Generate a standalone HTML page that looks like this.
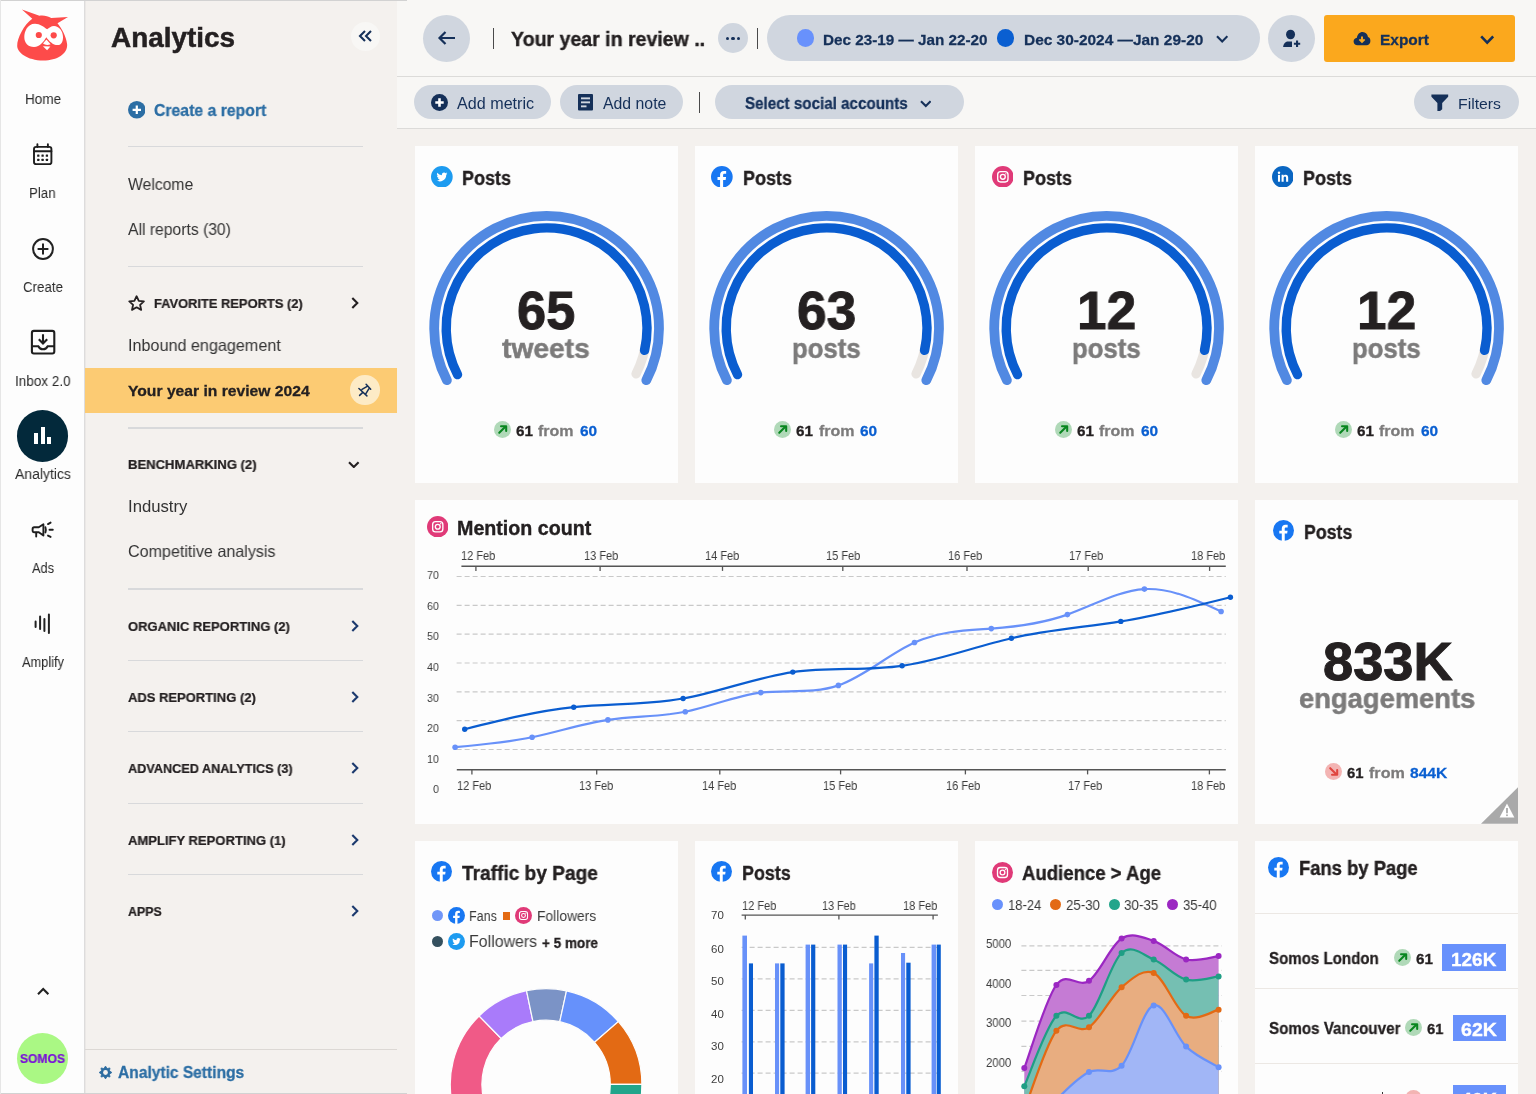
<!DOCTYPE html><html><head><meta charset="utf-8"><style>
*{margin:0;padding:0;box-sizing:border-box}
html,body{width:1536px;height:1094px;overflow:hidden;background:#f4f1ee;font-family:"Liberation Sans",sans-serif}
.t{position:absolute;white-space:nowrap;line-height:1;will-change:transform}
.r{position:absolute;display:block}
</style></head><body><div class="r" style="left:0.00px;top:0.00px;width:84.00px;height:1094.00px;background:#fdfdfd;"></div>
<div class="r" style="left:84.00px;top:0.00px;width:1.00px;height:1094.00px;background:#dddcdc;"></div>
<div class="r" style="left:85.00px;top:0.00px;width:1.00px;height:1094.00px;background:#ebe8e6;"></div>
<div class="r" style="left:86.00px;top:0.00px;width:311.00px;height:1094.00px;background:#f4f1ee;"></div>
<div class="r" style="left:397.00px;top:0.00px;width:1139.00px;height:128.00px;background:#f8f7f5;"></div>
<div class="r" style="left:397.00px;top:76.00px;width:1139.00px;height:1.20px;background:#dcdbd9;"></div>
<div class="r" style="left:397.00px;top:128.00px;width:1139.00px;height:1.20px;background:#dcdbd9;"></div>
<div class="r" style="left:0.00px;top:0.00px;width:407.00px;height:1.20px;background:#d2d2d2;"></div>
<div class="r" style="left:0.00px;top:1092.80px;width:407.00px;height:1.20px;background:#d2d2d2;"></div>
<div class="r" style="left:0.00px;top:0.00px;width:1.20px;height:1094.00px;background:#e6e6e6;"></div>
<svg class="r" style="left:12.00px;top:4.00px;" width="60.00" height="60.00" viewBox="0 0 60 60"><path fill="#fd4b4a" d="M9.9,5.5 L27.4,11.8 C31,11 36,12 39.2,14 L56,12.9 L45.5,19.2 C50,25 54,32 55.1,40 C56,50 45,56.5 31.3,56.5 C15,56.5 5,48 5.2,41.7 C5,35 12,20 20.3,14.8 Z"/><path fill="#fff" d="M35.1,25.2 C32,23 28,19.7 23,19.7 C15,19.7 12.3,28 12.3,33 C12.3,39 16,43 22,43 C28,43 32,37 34.3,33.2 C37,37 41,41.1 45.5,41.1 C50,41.1 51,37 51,33 C51,27 47,21.9 42,21.9 C39,21.9 37,24 35.1,25.2 Z"/><circle cx="26.8" cy="31" r="3.1" fill="#fd4b4a"/><circle cx="41.7" cy="31.3" r="3.1" fill="#fd4b4a"/><path fill="#fff" d="M31,39.6 L34.4,35.6 L38.6,40.3 C36,41.3 33,41.2 31,39.6 Z"/><path fill="#fff" d="M30.9,42.2 L38.4,42.6 L35.1,46.3 Z"/></svg>
<div class="t" style="left:24.60px;top:92.22px;font-size:14.68px;font-weight:400;color:#2b2b2b;transform:scaleX(0.9235);transform-origin:0 0;">Home</div>
<svg class="r" style="left:26.00px;top:136.00px;" width="34.00" height="36.00" viewBox="0 0 34 36"><rect x="8" y="10.9" width="17.4" height="17.2" rx="2.2" fill="none" stroke="#1e1e1e" stroke-width="1.9"/><path d="M8,15.3H25.4M11.4,8.2V11M21.9,8.2V11" stroke="#1e1e1e" stroke-width="1.9" stroke-linecap="round"/><rect x="11.15" y="18.45" width="2.3" height="2.3" rx="0.5" fill="#1e1e1e"/><rect x="11.15" y="22.75" width="2.3" height="2.3" rx="0.5" fill="#1e1e1e"/><rect x="15.45" y="18.45" width="2.3" height="2.3" rx="0.5" fill="#1e1e1e"/><rect x="15.45" y="22.75" width="2.3" height="2.3" rx="0.5" fill="#1e1e1e"/><rect x="19.75" y="18.45" width="2.3" height="2.3" rx="0.5" fill="#1e1e1e"/><rect x="19.75" y="22.75" width="2.3" height="2.3" rx="0.5" fill="#1e1e1e"/></svg>
<div class="t" style="left:29.40px;top:186.41px;font-size:14.68px;font-weight:400;color:#2b2b2b;transform:scaleX(0.9060);transform-origin:0 0;">Plan</div>
<svg class="r" style="left:31.90px;top:237.70px;" width="22.00" height="22.00" viewBox="0 0 22 22"><circle cx="11" cy="11" r="9.9" fill="none" stroke="#222" stroke-width="2"/><path d="M11 5.6V16.4M5.6 11H16.4" stroke="#222" stroke-width="2"/></svg>
<div class="t" style="left:22.75px;top:280.41px;font-size:14.68px;font-weight:400;color:#2b2b2b;transform:scaleX(0.9060);transform-origin:0 0;">Create</div>
<svg class="r" style="left:26.00px;top:322.00px;" width="34.00" height="40.00" viewBox="0 0 34 40"><rect x="5.9" y="8.9" width="22.4" height="22.6" rx="2" fill="none" stroke="#1e1e1e" stroke-width="2.1"/><path d="M17,12.2V21M12.8,17.3L17,21.5L21.2,17.3" fill="none" stroke="#1e1e1e" stroke-width="2.1"/><path d="M5.9,24.3H12.3C13.2,26.2 14.9,27.3 17,27.3C19.1,27.3 20.8,26.2 21.7,24.3H28.3" fill="none" stroke="#1e1e1e" stroke-width="2.1"/></svg>
<div class="t" style="left:14.90px;top:374.01px;font-size:14.68px;font-weight:400;color:#2b2b2b;transform:scaleX(0.9204);transform-origin:0 0;">Inbox 2.0</div>
<div class="r" style="left:16.75px;top:410.35px;width:51.30px;height:51.30px;background:#03293b;border-radius:50%;"></div>
<div class="r" style="left:33.90px;top:432.70px;width:4.10px;height:11.60px;background:#fff;"></div>
<div class="r" style="left:40.70px;top:427.20px;width:4.70px;height:17.10px;background:#fff;"></div>
<div class="r" style="left:47.00px;top:436.90px;width:4.30px;height:7.40px;background:#fff;"></div>
<div class="t" style="left:14.70px;top:467.31px;font-size:14.68px;font-weight:400;color:#2b2b2b;transform:scaleX(0.9536);transform-origin:0 0;">Analytics</div>
<svg class="r" style="left:26.00px;top:510.00px;" width="34.00" height="35.00" viewBox="0 0 34 35"><g fill="none" stroke="#1e1e1e" stroke-width="1.9" stroke-linecap="round" stroke-linejoin="round"><path d="M12.8,17.3 L17.4,14.2 V25.6 L12.8,22.3 H8.2 C7.1,22.3 6.6,21.6 6.6,20.6 V19 C6.6,18 7.1,17.3 8.2,17.3 Z"/><path d="M10.2,22.6 V26.6"/><path d="M19.4,17.2 C19.9,18.6 19.9,20.9 19.4,22.4"/><path d="M22,14.1 L24.6,12.6 M23.5,19.8 H26.8 M22,25.6 L24.6,26.9"/></g></svg>
<div class="t" style="left:31.70px;top:561.22px;font-size:14.68px;font-weight:400;color:#2b2b2b;transform:scaleX(0.8687);transform-origin:0 0;">Ads</div>
<svg class="r" style="left:26.00px;top:605.00px;" width="34.00" height="35.00" viewBox="0 0 34 35"><path d="M9.6,16.6V22.1M14.1,11.6V24M18.4,14V26.1M22.9,9.4V28" stroke="#222" stroke-width="2" stroke-linecap="round"/></svg>
<div class="t" style="left:21.70px;top:655.01px;font-size:14.68px;font-weight:400;color:#2b2b2b;transform:scaleX(0.8722);transform-origin:0 0;">Amplify</div>
<svg class="r" style="left:36.70px;top:986.50px;" width="12.40" height="8.20" viewBox="0 0 12.4 8.2"><path d="M1 7.2L6.2 2L11.4 7.2" fill="none" stroke="#222" stroke-width="2.1"/></svg>
<div class="r" style="left:16.90px;top:1032.90px;width:51.40px;height:51.40px;background:#aaf884;border-radius:50%;"></div>
<div class="t" style="left:20.10px;top:1053.01px;font-size:12.50px;font-weight:700;color:#7a12d8;transform:scaleX(0.9664);transform-origin:0 0;-webkit-text-stroke:0.23px #7a12d8;">SOMOS</div>
<div class="t" style="left:110.80px;top:23.81px;font-size:27.18px;font-weight:700;color:#242021;transform:scaleX(1.0263);transform-origin:0 0;-webkit-text-stroke:0.49px #242021;">Analytics</div>
<div class="r" style="left:350.50px;top:21.80px;width:29.00px;height:29.00px;background:#f8f7f5;border-radius:50%;"></div>
<svg class="r" style="left:357.50px;top:30.00px;" width="15.00" height="12.00" viewBox="0 0 15 12"><path d="M7 1L2 6L7 11M13 1L8 6L13 11" fill="none" stroke="#153059" stroke-width="2.1"/></svg>
<svg class="r" style="left:127.70px;top:101.00px;" width="17.60" height="17.60" viewBox="0 0 17.6 17.6"><circle cx="8.8" cy="8.8" r="8.8" fill="#2c6ea4"/><path d="M8.8 4.6V13M4.6 8.8H13" stroke="#fff" stroke-width="2.2"/></svg>
<div class="t" style="left:153.60px;top:102.30px;font-size:16.28px;font-weight:700;color:#2c6ea4;transform:scaleX(0.9704);transform-origin:0 0;-webkit-text-stroke:0.29px #2c6ea4;">Create a report</div>
<div class="r" style="left:127.70px;top:145.80px;width:235.10px;height:1.20px;background:#d8d9db;"></div>
<div class="r" style="left:127.70px;top:266.20px;width:235.10px;height:1.20px;background:#d8d9db;"></div>
<div class="r" style="left:127.70px;top:427.40px;width:235.10px;height:1.20px;background:#d8d9db;"></div>
<div class="r" style="left:127.70px;top:588.40px;width:235.10px;height:1.20px;background:#d8d9db;"></div>
<div class="r" style="left:127.70px;top:660.00px;width:235.10px;height:1.20px;background:#d8d9db;"></div>
<div class="r" style="left:127.70px;top:731.10px;width:235.10px;height:1.20px;background:#d8d9db;"></div>
<div class="r" style="left:127.70px;top:802.50px;width:235.10px;height:1.20px;background:#d8d9db;"></div>
<div class="r" style="left:127.70px;top:874.20px;width:235.10px;height:1.20px;background:#d8d9db;"></div>
<div class="t" style="left:127.70px;top:176.82px;font-size:15.99px;font-weight:400;color:#333333;transform:scaleX(0.9841);transform-origin:0 0;">Welcome</div>
<div class="t" style="left:127.70px;top:221.82px;font-size:15.99px;font-weight:400;color:#333333;transform:scaleX(0.9820);transform-origin:0 0;">All reports (30)</div>
<svg class="r" style="left:127.80px;top:295.00px;" width="17.20" height="16.00" viewBox="0 0 17.2 16"><path d="M8.6 1.2L10.8 5.9L15.9 6.4L12.1 9.8L13.2 14.9L8.6 12.3L4 14.9L5.1 9.8L1.3 6.4L6.4 5.9Z" fill="none" stroke="#242021" stroke-width="1.8" stroke-linejoin="round"/></svg>
<div class="t" style="left:154.00px;top:296.91px;font-size:13.52px;font-weight:700;color:#242021;transform:scaleX(0.9532);transform-origin:0 0;-webkit-text-stroke:0.24px #242021;">FAVORITE REPORTS (2)</div>
<svg class="r" style="left:350.90px;top:297.20px;" width="8.00" height="12.00" viewBox="0 0 8 12"><path d="M1.3 1L6.3 6L1.3 11" fill="none" stroke="#242021" stroke-width="2.1"/></svg>
<div class="t" style="left:127.80px;top:337.30px;font-size:16.28px;font-weight:400;color:#333333;transform:scaleX(0.9940);transform-origin:0 0;">Inbound engagement</div>
<div class="r" style="left:85.00px;top:368.00px;width:312.00px;height:44.70px;background:#fccb73;"></div>
<div class="t" style="left:127.80px;top:382.60px;font-size:15.55px;font-weight:700;color:#242021;transform:scaleX(1.0077);transform-origin:0 0;-webkit-text-stroke:0.28px #242021;">Your year in review 2024</div>
<div class="r" style="left:350.00px;top:375.40px;width:29.60px;height:29.60px;background:#fdebc6;border-radius:50%;"></div>
<svg class="r" style="left:348.00px;top:374.00px;" width="34.00" height="32.00" viewBox="348 374 34 32"><g fill="none" stroke="#153059" stroke-width="1.5" stroke-linecap="round" stroke-linejoin="round"><path d="M366.1,384.2L370.7,389.2M358.9,388.5L366.9,395.9M362,389.4L367.2,386.3M368.8,388.9L365.9,393.6M362.3,392.9L359.6,395.4"/></g></svg>
<div class="t" style="left:127.80px;top:458.10px;font-size:13.37px;font-weight:700;color:#242021;transform:scaleX(0.9786);transform-origin:0 0;-webkit-text-stroke:0.24px #242021;">BENCHMARKING (2)</div>
<svg class="r" style="left:348.30px;top:460.60px;" width="11.60" height="7.80" viewBox="0 0 11.6 7.8"><path d="M1 1.2L5.8 6L10.6 1.2" fill="none" stroke="#242021" stroke-width="2.1"/></svg>
<div class="t" style="left:127.80px;top:498.30px;font-size:16.28px;font-weight:400;color:#333333;transform:scaleX(1.0264);transform-origin:0 0;">Industry</div>
<div class="t" style="left:127.80px;top:543.21px;font-size:16.28px;font-weight:400;color:#333333;transform:scaleX(0.9887);transform-origin:0 0;">Competitive analysis</div>
<div class="t" style="left:127.80px;top:620.01px;font-size:13.52px;font-weight:700;color:#242021;transform:scaleX(0.9618);transform-origin:0 0;-webkit-text-stroke:0.24px #242021;">ORGANIC REPORTING (2)</div>
<svg class="r" style="left:351.20px;top:619.80px;" width="8.00" height="12.00" viewBox="0 0 8 12"><path d="M1.3 1L6.3 6L1.3 11" fill="none" stroke="#1c3a6e" stroke-width="2.1"/></svg>
<div class="t" style="left:127.80px;top:691.01px;font-size:13.52px;font-weight:700;color:#242021;transform:scaleX(0.9613);transform-origin:0 0;-webkit-text-stroke:0.24px #242021;">ADS REPORTING (2)</div>
<svg class="r" style="left:351.20px;top:690.80px;" width="8.00" height="12.00" viewBox="0 0 8 12"><path d="M1.3 1L6.3 6L1.3 11" fill="none" stroke="#1c3a6e" stroke-width="2.1"/></svg>
<div class="t" style="left:127.80px;top:762.10px;font-size:13.52px;font-weight:700;color:#242021;transform:scaleX(0.9392);transform-origin:0 0;-webkit-text-stroke:0.24px #242021;">ADVANCED ANALYTICS (3)</div>
<svg class="r" style="left:351.20px;top:761.90px;" width="8.00" height="12.00" viewBox="0 0 8 12"><path d="M1.3 1L6.3 6L1.3 11" fill="none" stroke="#1c3a6e" stroke-width="2.1"/></svg>
<div class="t" style="left:127.80px;top:833.72px;font-size:13.52px;font-weight:700;color:#242021;transform:scaleX(0.9639);transform-origin:0 0;-webkit-text-stroke:0.24px #242021;">AMPLIFY REPORTING (1)</div>
<svg class="r" style="left:351.20px;top:833.50px;" width="8.00" height="12.00" viewBox="0 0 8 12"><path d="M1.3 1L6.3 6L1.3 11" fill="none" stroke="#1c3a6e" stroke-width="2.1"/></svg>
<div class="t" style="left:127.80px;top:904.81px;font-size:13.52px;font-weight:700;color:#242021;transform:scaleX(0.9176);transform-origin:0 0;-webkit-text-stroke:0.24px #242021;">APPS</div>
<svg class="r" style="left:351.20px;top:904.60px;" width="8.00" height="12.00" viewBox="0 0 8 12"><path d="M1.3 1L6.3 6L1.3 11" fill="none" stroke="#1c3a6e" stroke-width="2.1"/></svg>
<div class="r" style="left:85.00px;top:1049.00px;width:312.00px;height:1.20px;background:#dcd8d4;"></div>
<svg class="r" style="left:96.00px;top:1063.00px;" width="20.00" height="20.00" viewBox="96 1063 20 20"><polygon points="105.50,1066.10 107.15,1068.53 110.03,1067.97 109.47,1070.85 111.90,1072.50 109.47,1074.15 110.03,1077.03 107.15,1076.47 105.50,1078.90 103.85,1076.47 100.97,1077.03 101.53,1074.15 99.10,1072.50 101.53,1070.85 100.97,1067.97 103.85,1068.53" fill="#2d6ca0" stroke="#2d6ca0" stroke-width="0.8" stroke-linejoin="round"/><circle cx="105.5" cy="1072.5" r="2.4" fill="#f4f1ee"/></svg>
<div class="t" style="left:117.70px;top:1064.91px;font-size:15.70px;font-weight:700;color:#2c6ea4;transform:scaleX(0.9915);transform-origin:0 0;-webkit-text-stroke:0.28px #2c6ea4;">Analytic Settings</div>
<div class="r" style="left:422.50px;top:14.50px;width:47.00px;height:47.00px;background:#d0d6df;border-radius:50%;"></div>
<svg class="r" style="left:436.50px;top:31.00px;" width="19.00" height="14.00" viewBox="0 0 19 14"><path d="M18 7H2.5M8.5 1L2.5 7L8.5 13" fill="none" stroke="#153059" stroke-width="2.2"/></svg>
<div class="r" style="left:492.50px;top:28.00px;width:1.20px;height:20.70px;background:#4a4a4a;"></div>
<div class="t" style="left:511.30px;top:29.40px;font-size:20.06px;font-weight:700;color:#242021;transform:scaleX(0.9750);transform-origin:0 0;-webkit-text-stroke:0.36px #242021;">Your year in review ..</div>
<div class="r" style="left:718.00px;top:23.00px;width:30.00px;height:30.00px;background:#d0d6df;border-radius:50%;"></div>
<div class="r" style="left:726.15px;top:36.65px;width:3.30px;height:3.30px;background:#153059;border-radius:50%;"></div>
<div class="r" style="left:731.35px;top:36.65px;width:3.30px;height:3.30px;background:#153059;border-radius:50%;"></div>
<div class="r" style="left:736.55px;top:36.65px;width:3.30px;height:3.30px;background:#153059;border-radius:50%;"></div>
<div class="r" style="left:757.00px;top:28.00px;width:1.20px;height:20.70px;background:#4a4a4a;"></div>
<div class="r" style="left:767.00px;top:15.00px;width:493.00px;height:46.00px;background:#d0d6df;border-radius:23px"></div>
<div class="r" style="left:796.70px;top:29.40px;width:17.20px;height:17.20px;background:#6891fc;border-radius:50%;"></div>
<div class="t" style="left:823.00px;top:31.80px;font-size:15.12px;font-weight:700;color:#153059;transform:scaleX(1.0096);transform-origin:0 0;-webkit-text-stroke:0.27px #153059;">Dec 23-19 — Jan 22-20</div>
<div class="r" style="left:996.90px;top:29.40px;width:17.20px;height:17.20px;background:#0a5fd1;border-radius:50%;"></div>
<div class="t" style="left:1023.60px;top:31.80px;font-size:15.12px;font-weight:700;color:#153059;transform:scaleX(1.0213);transform-origin:0 0;-webkit-text-stroke:0.27px #153059;">Dec 30-2024 —Jan 29-20</div>
<svg class="r" style="left:1215.50px;top:35.00px;" width="12.40" height="8.40" viewBox="0 0 12.4 8.4"><path d="M1 1.2L6.2 6.4L11.4 1.2" fill="none" stroke="#153059" stroke-width="2.1"/></svg>
<div class="r" style="left:1268.10px;top:15.00px;width:47.00px;height:47.00px;background:#d0d6df;border-radius:50%;"></div>
<svg class="r" style="left:1276.00px;top:22.00px;" width="32.00" height="32.00" viewBox="1276 22 32 32"><ellipse cx="1290.55" cy="34.5" rx="4.5" ry="4.8" fill="#153059"/><path d="M1283.1,47C1283.3,44 1285.2,41.4 1288,41.4H1292V47Z" fill="#153059"/><path d="M1297.05,40.5V47M1293.9,43.7H1300.2" stroke="#153059" stroke-width="2.1"/></svg>
<div class="r" style="left:1323.60px;top:15.00px;width:191.10px;height:47.00px;background:#fba81d;border-radius:3px"></div>
<svg class="r" style="left:1353.00px;top:31.00px;" width="18.00" height="15.00" viewBox="0 0 18 15"><path d="M4.6 14.2C2.2 14.2 0.6 12.5 0.6 10.4C0.6 8.5 2 6.9 3.9 6.7C4.4 3.4 6.6 1 9.6 1C12.6 1 14.6 3.2 15 6C16.5 6.3 17.4 7.8 17.4 9.9C17.4 12.3 15.8 14.2 13.4 14.2Z" fill="#153059"/><path d="M9 5.4V10.6M6.4 8.3L9 10.9L11.6 8.3" fill="none" stroke="#fba81d" stroke-width="1.9"/></svg>
<div class="t" style="left:1379.80px;top:32.71px;font-size:14.39px;font-weight:700;color:#153059;transform:scaleX(1.0759);transform-origin:0 0;-webkit-text-stroke:0.26px #153059;">Export</div>
<svg class="r" style="left:1479.80px;top:34.60px;" width="14.40" height="10.00" viewBox="0 0 14.4 10"><path d="M1.2 1.4L7.2 7.6L13.2 1.4" fill="none" stroke="#153059" stroke-width="2.6"/></svg>
<div class="r" style="left:413.60px;top:85.20px;width:137.80px;height:34.30px;background:#d0d6df;border-radius:17.2px"></div>
<svg class="r" style="left:431.20px;top:93.80px;" width="17.00" height="17.00" viewBox="0 0 17 17"><circle cx="8.5" cy="8.5" r="8.5" fill="#153059"/><path d="M8.5 4.3V12.7M4.3 8.5H12.7" stroke="#fff" stroke-width="2.6"/></svg>
<div class="t" style="left:457.00px;top:95.91px;font-size:15.84px;font-weight:400;color:#153059;transform:scaleX(1.0194);transform-origin:0 0;">Add metric</div>
<div class="r" style="left:560.30px;top:85.20px;width:123.20px;height:34.30px;background:#d0d6df;border-radius:17.2px"></div>
<svg class="r" style="left:578.00px;top:94.00px;" width="15.00" height="16.60" viewBox="0 0 15 16.6"><rect x="0" y="0" width="15" height="16.6" rx="1" fill="#153059"/><rect x="3" y="3.4" width="9" height="1.9" fill="#d0d6df"/><rect x="3" y="7.4" width="9" height="1.9" fill="#d0d6df"/><rect x="3" y="11.4" width="5.5" height="1.9" fill="#d0d6df"/></svg>
<div class="t" style="left:603.00px;top:95.91px;font-size:15.84px;font-weight:400;color:#153059;transform:scaleX(0.9929);transform-origin:0 0;">Add note</div>
<div class="r" style="left:699.00px;top:92.00px;width:1.20px;height:20.60px;background:#4a4a4a;"></div>
<div class="r" style="left:714.80px;top:85.20px;width:249.40px;height:34.30px;background:#d0d6df;border-radius:17.2px"></div>
<div class="t" style="left:745.00px;top:95.81px;font-size:15.84px;font-weight:700;color:#153059;transform:scaleX(0.9581);transform-origin:0 0;-webkit-text-stroke:0.29px #153059;">Select social accounts</div>
<svg class="r" style="left:919.80px;top:99.60px;" width="11.60" height="8.00" viewBox="0 0 11.6 8"><path d="M1 1.2L5.8 6L10.6 1.2" fill="none" stroke="#153059" stroke-width="2.1"/></svg>
<div class="r" style="left:1414.30px;top:85.00px;width:104.70px;height:34.20px;background:#d0d6df;border-radius:17.1px"></div>
<svg class="r" style="left:1431.30px;top:93.80px;" width="17.60" height="17.20" viewBox="0 0 17.6 17.2"><path d="M0.4 0.4H17.2V2.8L11.2 9V15.2L8.8 17.2H6.4V9L0.4 2.8Z" fill="#153059"/></svg>
<div class="t" style="left:1458.00px;top:95.90px;font-size:15.41px;font-weight:400;color:#153059;transform:scaleX(1.0237);transform-origin:0 0;">Filters</div>
<div class="r" style="left:414.60px;top:146.00px;width:263.10px;height:336.80px;background:#fdfdfd;"></div>
<div class="r" style="left:694.90px;top:146.00px;width:263.10px;height:336.80px;background:#fdfdfd;"></div>
<div class="r" style="left:975.10px;top:146.00px;width:263.10px;height:336.80px;background:#fdfdfd;"></div>
<div class="r" style="left:1255.10px;top:146.00px;width:263.10px;height:336.80px;background:#fdfdfd;"></div>
<div class="r" style="left:414.60px;top:500.30px;width:823.60px;height:323.60px;background:#fdfdfd;"></div>
<div class="r" style="left:1255.10px;top:500.30px;width:263.10px;height:323.60px;background:#fdfdfd;"></div>
<div class="r" style="left:414.60px;top:841.10px;width:263.10px;height:258.90px;background:#fdfdfd;"></div>
<div class="r" style="left:694.90px;top:841.10px;width:263.10px;height:258.90px;background:#fdfdfd;"></div>
<div class="r" style="left:975.10px;top:841.10px;width:263.10px;height:258.90px;background:#fdfdfd;"></div>
<div class="r" style="left:1255.10px;top:841.10px;width:263.10px;height:258.90px;background:#fdfdfd;"></div>
<svg class="r" style="left:431.05px;top:165.75px;" width="21.70" height="21.70" viewBox="0 0 24 24"><circle cx="12" cy="12" r="12" fill="#1d9bf0"/><path fill="#fff" d="M18.2 8.3c-.45.2-.93.33-1.43.39.51-.31.9-.8 1.09-1.37-.48.28-1.01.49-1.58.6a2.49 2.49 0 0 0-4.24 2.27A7.07 7.07 0 0 1 6.9 7.6a2.49 2.49 0 0 0 .77 3.32c-.41-.01-.79-.12-1.13-.31v.03c0 1.2.86 2.21 2 2.44-.37.1-.76.11-1.12.04a2.5 2.5 0 0 0 2.32 1.73A5 5 0 0 1 6 15.88a7.05 7.05 0 0 0 10.86-5.94v-.32c.48-.35.9-.78 1.24-1.28z"/></svg>
<div class="t" style="left:462.30px;top:167.51px;font-size:20.49px;font-weight:700;color:#242021;transform:scaleX(0.8774);transform-origin:0 0;-webkit-text-stroke:0.37px #242021;">Posts</div>
<svg class="r" style="left:414.60px;top:146.00px;" width="263.10" height="336.80" viewBox="0 0 263.1 336.8"><path d="M31.90,234.20 A112.4,112.4 0 1 1 231.30,234.20" fill="none" stroke="#5189e2" stroke-width="9.8" stroke-linecap="round"/><path d="M231.45,192.79 A100.4,100.4 0 0 1 221.06,227.88" fill="none" stroke="#e9e5e1" stroke-width="9.4" stroke-linecap="round"/><path d="M42.54,228.66 A100.4,100.4 0 1 1 229.54,204.37" fill="none" stroke="#0a5dd0" stroke-width="9.4" stroke-linecap="round"/></svg>
<div class="t" style="left:517.20px;top:283.40px;font-size:54.22px;font-weight:700;color:#242021;transform:scaleX(0.9638);transform-origin:0 0;-webkit-text-stroke:0.98px #242021;">65</div>
<div class="t" style="left:502.35px;top:333.90px;font-size:28.34px;font-weight:700;color:#7c7b7b;transform:scaleX(0.9949);transform-origin:0 0;-webkit-text-stroke:0.51px #7c7b7b;">tweets</div>
<svg class="r" style="left:494.10px;top:420.90px;" width="17.00" height="17.00" viewBox="0 0 24 24"><circle cx="12" cy="12" r="12" fill="#b0d9b8"/><path d="M7.4 16.7L15.6 8.6" stroke="#08861f" stroke-width="2.9" stroke-linecap="round"/><path d="M9.9 7.4H17.2V14" fill="none" stroke="#08861f" stroke-width="2.9" stroke-linecap="round" stroke-linejoin="round"/></svg>
<div class="t" style="left:516.00px;top:424.01px;font-size:14.68px;font-weight:700;color:#242021;transform:scaleX(1.0371);transform-origin:0 0;-webkit-text-stroke:0.26px #242021;">61</div>
<div class="t" style="left:538.30px;top:424.01px;font-size:14.68px;font-weight:700;color:#7c7b7b;transform:scaleX(1.0923);transform-origin:0 0;-webkit-text-stroke:0.26px #7c7b7b;">from</div>
<div class="t" style="left:580.00px;top:424.01px;font-size:14.68px;font-weight:700;color:#0a5fd1;transform:scaleX(1.0494);transform-origin:0 0;-webkit-text-stroke:0.26px #0a5fd1;">60</div>
<svg class="r" style="left:711.35px;top:165.75px;" width="21.70" height="21.70" viewBox="0 0 24 24"><circle cx="12" cy="12" r="12" fill="#1877f2"/><path fill="#fff" d="M13.4 24V15.5h2.8l.45-3.3H13.4v-2.1c0-.95.27-1.6 1.63-1.6h1.73V5.55c-.3-.04-1.33-.13-2.52-.13-2.5 0-4.2 1.52-4.2 4.3v2.48H7.2v3.3h2.84V24z"/></svg>
<div class="t" style="left:742.60px;top:167.51px;font-size:20.49px;font-weight:700;color:#242021;transform:scaleX(0.8774);transform-origin:0 0;-webkit-text-stroke:0.37px #242021;">Posts</div>
<svg class="r" style="left:694.90px;top:146.00px;" width="263.10" height="336.80" viewBox="0 0 263.1 336.8"><path d="M31.90,234.20 A112.4,112.4 0 1 1 231.30,234.20" fill="none" stroke="#5189e2" stroke-width="9.8" stroke-linecap="round"/><path d="M231.45,192.79 A100.4,100.4 0 0 1 221.06,227.88" fill="none" stroke="#e9e5e1" stroke-width="9.4" stroke-linecap="round"/><path d="M42.54,228.66 A100.4,100.4 0 1 1 229.54,204.37" fill="none" stroke="#0a5dd0" stroke-width="9.4" stroke-linecap="round"/></svg>
<div class="t" style="left:797.00px;top:283.40px;font-size:54.22px;font-weight:700;color:#242021;transform:scaleX(0.9804);transform-origin:0 0;-webkit-text-stroke:0.98px #242021;">63</div>
<div class="t" style="left:792.15px;top:333.90px;font-size:28.34px;font-weight:700;color:#7c7b7b;transform:scaleX(0.9095);transform-origin:0 0;-webkit-text-stroke:0.51px #7c7b7b;">posts</div>
<svg class="r" style="left:774.40px;top:420.90px;" width="17.00" height="17.00" viewBox="0 0 24 24"><circle cx="12" cy="12" r="12" fill="#b0d9b8"/><path d="M7.4 16.7L15.6 8.6" stroke="#08861f" stroke-width="2.9" stroke-linecap="round"/><path d="M9.9 7.4H17.2V14" fill="none" stroke="#08861f" stroke-width="2.9" stroke-linecap="round" stroke-linejoin="round"/></svg>
<div class="t" style="left:796.30px;top:424.01px;font-size:14.68px;font-weight:700;color:#242021;transform:scaleX(1.0371);transform-origin:0 0;-webkit-text-stroke:0.26px #242021;">61</div>
<div class="t" style="left:818.60px;top:424.01px;font-size:14.68px;font-weight:700;color:#7c7b7b;transform:scaleX(1.0923);transform-origin:0 0;-webkit-text-stroke:0.26px #7c7b7b;">from</div>
<div class="t" style="left:860.30px;top:424.01px;font-size:14.68px;font-weight:700;color:#0a5fd1;transform:scaleX(1.0494);transform-origin:0 0;-webkit-text-stroke:0.26px #0a5fd1;">60</div>
<svg class="r" style="left:991.55px;top:165.75px;" width="21.70" height="21.70" viewBox="0 0 24 24"><circle cx="12" cy="12" r="12" fill="#e03a78"/><rect x="6.3" y="6.3" width="11.4" height="11.4" rx="3.2" fill="none" stroke="#fff" stroke-width="1.5"/><circle cx="12" cy="12" r="2.7" fill="none" stroke="#fff" stroke-width="1.5"/><circle cx="15.3" cy="8.7" r="0.8" fill="#fff"/></svg>
<div class="t" style="left:1022.80px;top:167.51px;font-size:20.49px;font-weight:700;color:#242021;transform:scaleX(0.8774);transform-origin:0 0;-webkit-text-stroke:0.37px #242021;">Posts</div>
<svg class="r" style="left:975.10px;top:146.00px;" width="263.10" height="336.80" viewBox="0 0 263.1 336.8"><path d="M31.90,234.20 A112.4,112.4 0 1 1 231.30,234.20" fill="none" stroke="#5189e2" stroke-width="9.8" stroke-linecap="round"/><path d="M231.45,192.79 A100.4,100.4 0 0 1 221.06,227.88" fill="none" stroke="#e9e5e1" stroke-width="9.4" stroke-linecap="round"/><path d="M42.54,228.66 A100.4,100.4 0 1 1 229.54,204.37" fill="none" stroke="#0a5dd0" stroke-width="9.4" stroke-linecap="round"/></svg>
<div class="t" style="left:1077.20px;top:283.40px;font-size:54.22px;font-weight:700;color:#242021;transform:scaleX(0.9804);transform-origin:0 0;-webkit-text-stroke:0.98px #242021;">12</div>
<div class="t" style="left:1072.35px;top:333.90px;font-size:28.34px;font-weight:700;color:#7c7b7b;transform:scaleX(0.9095);transform-origin:0 0;-webkit-text-stroke:0.51px #7c7b7b;">posts</div>
<svg class="r" style="left:1054.60px;top:420.90px;" width="17.00" height="17.00" viewBox="0 0 24 24"><circle cx="12" cy="12" r="12" fill="#b0d9b8"/><path d="M7.4 16.7L15.6 8.6" stroke="#08861f" stroke-width="2.9" stroke-linecap="round"/><path d="M9.9 7.4H17.2V14" fill="none" stroke="#08861f" stroke-width="2.9" stroke-linecap="round" stroke-linejoin="round"/></svg>
<div class="t" style="left:1076.50px;top:424.01px;font-size:14.68px;font-weight:700;color:#242021;transform:scaleX(1.0371);transform-origin:0 0;-webkit-text-stroke:0.26px #242021;">61</div>
<div class="t" style="left:1098.80px;top:424.01px;font-size:14.68px;font-weight:700;color:#7c7b7b;transform:scaleX(1.0923);transform-origin:0 0;-webkit-text-stroke:0.26px #7c7b7b;">from</div>
<div class="t" style="left:1140.50px;top:424.01px;font-size:14.68px;font-weight:700;color:#0a5fd1;transform:scaleX(1.0494);transform-origin:0 0;-webkit-text-stroke:0.26px #0a5fd1;">60</div>
<svg class="r" style="left:1271.55px;top:165.75px;" width="21.70" height="21.70" viewBox="0 0 24 24"><circle cx="12" cy="12" r="12" fill="#0a66c2"/><rect x="6.6" y="9.8" width="2.3" height="7.6" fill="#fff"/><circle cx="7.75" cy="7.4" r="1.35" fill="#fff"/><path fill="#fff" d="M10.6 9.8h2.2v1.05c.35-.62 1.15-1.25 2.35-1.25 2.3 0 2.75 1.5 2.75 3.5v4.3h-2.3v-3.8c0-.9-.02-2.05-1.25-2.05-1.25 0-1.45.97-1.45 1.98v3.87h-2.3z"/></svg>
<div class="t" style="left:1302.80px;top:167.51px;font-size:20.49px;font-weight:700;color:#242021;transform:scaleX(0.8774);transform-origin:0 0;-webkit-text-stroke:0.37px #242021;">Posts</div>
<svg class="r" style="left:1255.10px;top:146.00px;" width="263.10" height="336.80" viewBox="0 0 263.1 336.8"><path d="M31.90,234.20 A112.4,112.4 0 1 1 231.30,234.20" fill="none" stroke="#5189e2" stroke-width="9.8" stroke-linecap="round"/><path d="M231.45,192.79 A100.4,100.4 0 0 1 221.06,227.88" fill="none" stroke="#e9e5e1" stroke-width="9.4" stroke-linecap="round"/><path d="M42.54,228.66 A100.4,100.4 0 1 1 229.54,204.37" fill="none" stroke="#0a5dd0" stroke-width="9.4" stroke-linecap="round"/></svg>
<div class="t" style="left:1357.20px;top:283.40px;font-size:54.22px;font-weight:700;color:#242021;transform:scaleX(0.9804);transform-origin:0 0;-webkit-text-stroke:0.98px #242021;">12</div>
<div class="t" style="left:1352.35px;top:333.90px;font-size:28.34px;font-weight:700;color:#7c7b7b;transform:scaleX(0.9095);transform-origin:0 0;-webkit-text-stroke:0.51px #7c7b7b;">posts</div>
<svg class="r" style="left:1334.60px;top:420.90px;" width="17.00" height="17.00" viewBox="0 0 24 24"><circle cx="12" cy="12" r="12" fill="#b0d9b8"/><path d="M7.4 16.7L15.6 8.6" stroke="#08861f" stroke-width="2.9" stroke-linecap="round"/><path d="M9.9 7.4H17.2V14" fill="none" stroke="#08861f" stroke-width="2.9" stroke-linecap="round" stroke-linejoin="round"/></svg>
<div class="t" style="left:1356.50px;top:424.01px;font-size:14.68px;font-weight:700;color:#242021;transform:scaleX(1.0371);transform-origin:0 0;-webkit-text-stroke:0.26px #242021;">61</div>
<div class="t" style="left:1378.80px;top:424.01px;font-size:14.68px;font-weight:700;color:#7c7b7b;transform:scaleX(1.0923);transform-origin:0 0;-webkit-text-stroke:0.26px #7c7b7b;">from</div>
<div class="t" style="left:1420.50px;top:424.01px;font-size:14.68px;font-weight:700;color:#0a5fd1;transform:scaleX(1.0494);transform-origin:0 0;-webkit-text-stroke:0.26px #0a5fd1;">60</div>
<svg class="r" style="left:426.65px;top:515.75px;" width="21.50" height="21.50" viewBox="0 0 24 24"><circle cx="12" cy="12" r="12" fill="#e03a78"/><rect x="6.3" y="6.3" width="11.4" height="11.4" rx="3.2" fill="none" stroke="#fff" stroke-width="1.5"/><circle cx="12" cy="12" r="2.7" fill="none" stroke="#fff" stroke-width="1.5"/><circle cx="15.3" cy="8.7" r="0.8" fill="#fff"/></svg>
<div class="t" style="left:457.30px;top:518.72px;font-size:19.33px;font-weight:700;color:#242021;transform:scaleX(1.0171);transform-origin:0 0;-webkit-text-stroke:0.35px #242021;">Mention count</div>
<svg class="r" style="left:414.60px;top:500.30px;" width="823.50" height="323.60" viewBox="0 0 823.5 323.6"><line x1="41.60" y1="76.50" x2="810.80" y2="76.50" stroke="#c9c9c9" stroke-width="1.2" stroke-dasharray="5 3"/><line x1="41.60" y1="105.33" x2="810.80" y2="105.33" stroke="#c9c9c9" stroke-width="1.2" stroke-dasharray="5 3"/><line x1="41.60" y1="134.16" x2="810.80" y2="134.16" stroke="#c9c9c9" stroke-width="1.2" stroke-dasharray="5 3"/><line x1="41.60" y1="162.99" x2="810.80" y2="162.99" stroke="#c9c9c9" stroke-width="1.2" stroke-dasharray="5 3"/><line x1="41.60" y1="191.82" x2="810.80" y2="191.82" stroke="#c9c9c9" stroke-width="1.2" stroke-dasharray="5 3"/><line x1="41.60" y1="220.65" x2="810.80" y2="220.65" stroke="#c9c9c9" stroke-width="1.2" stroke-dasharray="5 3"/><line x1="41.60" y1="249.48" x2="810.80" y2="249.48" stroke="#c9c9c9" stroke-width="1.2" stroke-dasharray="5 3"/><line x1="46.40" y1="66.30" x2="810.80" y2="66.30" stroke="#555" stroke-width="1.4" /><line x1="41.80" y1="269.80" x2="810.80" y2="269.80" stroke="#555" stroke-width="1.4" /><line x1="60.90" y1="66.30" x2="60.90" y2="70.90" stroke="#555" stroke-width="1.3" /><line x1="185.10" y1="66.30" x2="185.10" y2="70.90" stroke="#555" stroke-width="1.3" /><line x1="307.50" y1="66.30" x2="307.50" y2="70.90" stroke="#555" stroke-width="1.3" /><line x1="427.80" y1="66.30" x2="427.80" y2="70.90" stroke="#555" stroke-width="1.3" /><line x1="552.00" y1="66.30" x2="552.00" y2="70.90" stroke="#555" stroke-width="1.3" /><line x1="673.20" y1="66.30" x2="673.20" y2="70.90" stroke="#555" stroke-width="1.3" /><line x1="794.60" y1="66.30" x2="794.60" y2="70.90" stroke="#555" stroke-width="1.3" /><line x1="56.90" y1="269.80" x2="56.90" y2="274.40" stroke="#555" stroke-width="1.3" /><line x1="181.70" y1="269.80" x2="181.70" y2="274.40" stroke="#555" stroke-width="1.3" /><line x1="304.80" y1="269.80" x2="304.80" y2="274.40" stroke="#555" stroke-width="1.3" /><line x1="425.60" y1="269.80" x2="425.60" y2="274.40" stroke="#555" stroke-width="1.3" /><line x1="550.40" y1="269.80" x2="550.40" y2="274.40" stroke="#555" stroke-width="1.3" /><line x1="672.60" y1="269.80" x2="672.60" y2="274.40" stroke="#555" stroke-width="1.3" /><line x1="794.40" y1="269.80" x2="794.40" y2="274.40" stroke="#555" stroke-width="1.3" /><path d="M40.10,247.20 C65.93,244.90 91.76,242.61 117.10,237.30 C142.44,231.99 167.30,223.67 192.90,219.90 C218.50,216.13 244.85,216.91 270.30,211.80 C295.75,206.69 320.31,195.71 345.80,192.60 C371.29,189.49 397.70,194.27 423.40,185.40 C449.10,176.53 474.07,154.02 499.50,142.50 C524.93,130.98 550.80,130.43 576.30,128.60 C601.80,126.77 626.92,123.64 652.40,114.60 C677.88,105.56 703.72,90.60 729.40,89.10 C755.08,87.60 780.59,99.55 806.10,111.50" fill="none" stroke="#6891f9" stroke-width="2.2"/><path d="M49.70,229.20 C86.01,220.08 122.31,210.97 158.70,207.20 C195.09,203.43 231.55,205.01 268.10,198.50 C304.65,191.99 341.29,177.38 377.80,172.10 C414.31,166.82 450.69,170.86 487.10,165.80 C523.51,160.74 559.95,146.57 596.40,138.20 C632.85,129.83 669.30,127.27 705.80,121.40 C742.30,115.53 778.85,106.37 815.40,97.20" fill="none" stroke="#0a5dd0" stroke-width="2.2"/><circle cx="40.10" cy="247.20" r="2.8" fill="#6891f9"/><circle cx="117.10" cy="237.30" r="2.8" fill="#6891f9"/><circle cx="192.90" cy="219.90" r="2.8" fill="#6891f9"/><circle cx="270.30" cy="211.80" r="2.8" fill="#6891f9"/><circle cx="345.80" cy="192.60" r="2.8" fill="#6891f9"/><circle cx="423.40" cy="185.40" r="2.8" fill="#6891f9"/><circle cx="499.50" cy="142.50" r="2.8" fill="#6891f9"/><circle cx="576.30" cy="128.60" r="2.8" fill="#6891f9"/><circle cx="652.40" cy="114.60" r="2.8" fill="#6891f9"/><circle cx="729.40" cy="89.10" r="2.8" fill="#6891f9"/><circle cx="806.10" cy="111.50" r="2.8" fill="#6891f9"/><circle cx="49.70" cy="229.20" r="2.7" fill="#0a5dd0"/><circle cx="158.70" cy="207.20" r="2.7" fill="#0a5dd0"/><circle cx="268.10" cy="198.50" r="2.7" fill="#0a5dd0"/><circle cx="377.80" cy="172.10" r="2.7" fill="#0a5dd0"/><circle cx="487.10" cy="165.80" r="2.7" fill="#0a5dd0"/><circle cx="596.40" cy="138.20" r="2.7" fill="#0a5dd0"/><circle cx="705.80" cy="121.40" r="2.7" fill="#0a5dd0"/><circle cx="815.40" cy="97.20" r="2.7" fill="#0a5dd0"/></svg>
<div class="t" style="left:427.20px;top:570.01px;font-size:11.48px;font-weight:400;color:#3d3d3d;transform:scaleX(0.9258);transform-origin:0 0;">70</div>
<div class="t" style="left:427.20px;top:600.65px;font-size:11.48px;font-weight:400;color:#3d3d3d;transform:scaleX(0.9258);transform-origin:0 0;">60</div>
<div class="t" style="left:427.20px;top:631.30px;font-size:11.48px;font-weight:400;color:#3d3d3d;transform:scaleX(0.9258);transform-origin:0 0;">50</div>
<div class="t" style="left:427.20px;top:661.96px;font-size:11.48px;font-weight:400;color:#3d3d3d;transform:scaleX(0.9258);transform-origin:0 0;">40</div>
<div class="t" style="left:427.20px;top:692.61px;font-size:11.48px;font-weight:400;color:#3d3d3d;transform:scaleX(0.9258);transform-origin:0 0;">30</div>
<div class="t" style="left:427.20px;top:723.26px;font-size:11.48px;font-weight:400;color:#3d3d3d;transform:scaleX(0.9258);transform-origin:0 0;">20</div>
<div class="t" style="left:427.20px;top:753.90px;font-size:11.48px;font-weight:400;color:#3d3d3d;transform:scaleX(0.9258);transform-origin:0 0;">10</div>
<div class="t" style="left:433.10px;top:784.11px;font-size:11.48px;font-weight:400;color:#3d3d3d;transform:scaleX(0.9258);transform-origin:0 0;">0</div>
<div class="t" style="left:461.00px;top:549.81px;font-size:12.06px;font-weight:400;color:#3d3d3d;transform:scaleX(0.9154);transform-origin:0 0;">12 Feb</div>
<div class="t" style="left:583.50px;top:549.81px;font-size:12.06px;font-weight:400;color:#3d3d3d;transform:scaleX(0.9154);transform-origin:0 0;">13 Feb</div>
<div class="t" style="left:704.50px;top:549.81px;font-size:12.06px;font-weight:400;color:#3d3d3d;transform:scaleX(0.9154);transform-origin:0 0;">14 Feb</div>
<div class="t" style="left:825.70px;top:549.81px;font-size:12.06px;font-weight:400;color:#3d3d3d;transform:scaleX(0.9154);transform-origin:0 0;">15 Feb</div>
<div class="t" style="left:947.50px;top:549.81px;font-size:12.06px;font-weight:400;color:#3d3d3d;transform:scaleX(0.9154);transform-origin:0 0;">16 Feb</div>
<div class="t" style="left:1068.80px;top:549.81px;font-size:12.06px;font-weight:400;color:#3d3d3d;transform:scaleX(0.9154);transform-origin:0 0;">17 Feb</div>
<div class="t" style="left:1190.90px;top:549.81px;font-size:12.06px;font-weight:400;color:#3d3d3d;transform:scaleX(0.9154);transform-origin:0 0;">18 Feb</div>
<div class="t" style="left:457.00px;top:780.00px;font-size:12.06px;font-weight:400;color:#3d3d3d;transform:scaleX(0.9154);transform-origin:0 0;">12 Feb</div>
<div class="t" style="left:579.20px;top:780.00px;font-size:12.06px;font-weight:400;color:#3d3d3d;transform:scaleX(0.9154);transform-origin:0 0;">13 Feb</div>
<div class="t" style="left:702.00px;top:780.00px;font-size:12.06px;font-weight:400;color:#3d3d3d;transform:scaleX(0.9154);transform-origin:0 0;">14 Feb</div>
<div class="t" style="left:823.20px;top:780.00px;font-size:12.06px;font-weight:400;color:#3d3d3d;transform:scaleX(0.9154);transform-origin:0 0;">15 Feb</div>
<div class="t" style="left:946.00px;top:780.00px;font-size:12.06px;font-weight:400;color:#3d3d3d;transform:scaleX(0.9154);transform-origin:0 0;">16 Feb</div>
<div class="t" style="left:1068.40px;top:780.00px;font-size:12.06px;font-weight:400;color:#3d3d3d;transform:scaleX(0.9154);transform-origin:0 0;">17 Feb</div>
<div class="t" style="left:1190.90px;top:780.00px;font-size:12.06px;font-weight:400;color:#3d3d3d;transform:scaleX(0.9154);transform-origin:0 0;">18 Feb</div>
<svg class="r" style="left:1272.50px;top:519.90px;" width="21.00" height="21.00" viewBox="0 0 24 24"><circle cx="12" cy="12" r="12" fill="#1877f2"/><path fill="#fff" d="M13.4 24V15.5h2.8l.45-3.3H13.4v-2.1c0-.95.27-1.6 1.63-1.6h1.73V5.55c-.3-.04-1.33-.13-2.52-.13-2.5 0-4.2 1.52-4.2 4.3v2.48H7.2v3.3h2.84V24z"/></svg>
<div class="t" style="left:1303.70px;top:521.81px;font-size:20.49px;font-weight:700;color:#242021;transform:scaleX(0.8649);transform-origin:0 0;-webkit-text-stroke:0.37px #242021;">Posts</div>
<div class="t" style="left:1323.35px;top:635.32px;font-size:53.63px;font-weight:700;color:#242021;transform:scaleX(1.0118);transform-origin:0 0;-webkit-text-stroke:0.97px #242021;">833K</div>
<div class="t" style="left:1299.00px;top:683.71px;font-size:28.34px;font-weight:700;color:#7c7b7b;transform:scaleX(0.9657);transform-origin:0 0;-webkit-text-stroke:0.51px #7c7b7b;">engagements</div>
<svg class="r" style="left:1325.00px;top:762.90px;" width="17.00" height="17.00" viewBox="0 0 24 24"><circle cx="12" cy="12" r="12" fill="#f3b4b3"/><path d="M7.4 7.3L15.6 15.4" stroke="#e0443e" stroke-width="2.9" stroke-linecap="round"/><path d="M9.9 16.6H17.2V10" fill="none" stroke="#e0443e" stroke-width="2.9" stroke-linecap="round" stroke-linejoin="round"/></svg>
<div class="t" style="left:1347.30px;top:766.01px;font-size:14.68px;font-weight:700;color:#242021;transform:scaleX(1.0126);transform-origin:0 0;-webkit-text-stroke:0.26px #242021;">61</div>
<div class="t" style="left:1369.00px;top:766.01px;font-size:14.68px;font-weight:700;color:#7c7b7b;transform:scaleX(1.0985);transform-origin:0 0;-webkit-text-stroke:0.26px #7c7b7b;">from</div>
<div class="t" style="left:1410.40px;top:766.01px;font-size:14.68px;font-weight:700;color:#0a5fd1;transform:scaleX(1.0631);transform-origin:0 0;-webkit-text-stroke:0.26px #0a5fd1;">844K</div>
<svg class="r" style="left:1481.00px;top:787.10px;" width="37.20" height="36.80" viewBox="0 0 37.2 36.8"><path d="M37.2 0V36.8H0Z" fill="#a9a9a9"/><path d="M26 16.6L33.4 30.4H18.6Z" fill="#fff"/><path d="M26 21V26.2" stroke="#a9a9a9" stroke-width="1.8"/><circle cx="26" cy="28.3" r="0.95" fill="#a9a9a9"/></svg>
<svg class="r" style="left:430.90px;top:861.00px;" width="21.00" height="21.00" viewBox="0 0 24 24"><circle cx="12" cy="12" r="12" fill="#1877f2"/><path fill="#fff" d="M13.4 24V15.5h2.8l.45-3.3H13.4v-2.1c0-.95.27-1.6 1.63-1.6h1.73V5.55c-.3-.04-1.33-.13-2.52-.13-2.5 0-4.2 1.52-4.2 4.3v2.48H7.2v3.3h2.84V24z"/></svg>
<div class="t" style="left:461.50px;top:863.51px;font-size:19.33px;font-weight:700;color:#242021;transform:scaleX(0.9880);transform-origin:0 0;-webkit-text-stroke:0.35px #242021;">Traffic by Page</div>
<div class="r" style="left:432.40px;top:910.20px;width:11.00px;height:11.00px;background:#7096f8;border-radius:50%;"></div>
<svg class="r" style="left:447.50px;top:907.20px;" width="17.00" height="17.00" viewBox="0 0 24 24"><circle cx="12" cy="12" r="12" fill="#1877f2"/><path fill="#fff" d="M13.4 24V15.5h2.8l.45-3.3H13.4v-2.1c0-.95.27-1.6 1.63-1.6h1.73V5.55c-.3-.04-1.33-.13-2.52-.13-2.5 0-4.2 1.52-4.2 4.3v2.48H7.2v3.3h2.84V24z"/></svg>
<div class="t" style="left:469.30px;top:909.21px;font-size:14.39px;font-weight:400;color:#3a3a3a;transform:scaleX(0.8745);transform-origin:0 0;">Fans</div>
<div class="r" style="left:502.60px;top:912.00px;width:7.90px;height:8.00px;background:#e36a14;"></div>
<svg class="r" style="left:514.60px;top:907.20px;" width="17.00" height="17.00" viewBox="0 0 24 24"><circle cx="12" cy="12" r="12" fill="#e03a78"/><rect x="6.3" y="6.3" width="11.4" height="11.4" rx="3.2" fill="none" stroke="#fff" stroke-width="1.5"/><circle cx="12" cy="12" r="2.7" fill="none" stroke="#fff" stroke-width="1.5"/><circle cx="15.3" cy="8.7" r="0.8" fill="#fff"/></svg>
<div class="t" style="left:536.90px;top:909.21px;font-size:14.39px;font-weight:400;color:#3a3a3a;transform:scaleX(0.9628);transform-origin:0 0;">Followers</div>
<div class="r" style="left:432.40px;top:936.30px;width:11.00px;height:11.00px;background:#34505e;border-radius:50%;"></div>
<svg class="r" style="left:447.50px;top:933.30px;" width="17.00" height="17.00" viewBox="0 0 24 24"><circle cx="12" cy="12" r="12" fill="#1d9bf0"/><path fill="#fff" d="M18.2 8.3c-.45.2-.93.33-1.43.39.51-.31.9-.8 1.09-1.37-.48.28-1.01.49-1.58.6a2.49 2.49 0 0 0-4.24 2.27A7.07 7.07 0 0 1 6.9 7.6a2.49 2.49 0 0 0 .77 3.32c-.41-.01-.79-.12-1.13-.31v.03c0 1.2.86 2.21 2 2.44-.37.1-.76.11-1.12.04a2.5 2.5 0 0 0 2.32 1.73A5 5 0 0 1 6 15.88a7.05 7.05 0 0 0 10.86-5.94v-.32c.48-.35.9-.78 1.24-1.28z"/></svg>
<div class="t" style="left:469.30px;top:932.70px;font-size:16.13px;font-weight:400;color:#3a3a3a;transform:scaleX(0.9891);transform-origin:0 0;">Followers</div>
<div class="t" style="left:542.40px;top:935.51px;font-size:14.54px;font-weight:700;color:#242021;transform:scaleX(0.9306);transform-origin:0 0;-webkit-text-stroke:0.26px #242021;">+ 5 more</div>
<svg class="r" style="left:414.60px;top:841.10px;" width="263.10" height="260.00" viewBox="0 0 263.1 260"><path d="M114.46,337.74 A95.8,95.8 0 0 1 64.07,174.95 L86.18,197.53 A64.2,64.2 0 0 0 119.95,306.62Z" fill="#f05a87" stroke="#fdfdfd" stroke-width="1.2"/><path d="M64.07,174.95 A95.8,95.8 0 0 1 111.51,149.62 L117.97,180.56 A64.2,64.2 0 0 0 86.18,197.53Z" fill="#a97bfa" stroke="#fdfdfd" stroke-width="1.2"/><path d="M111.51,149.62 A95.8,95.8 0 0 1 151.51,149.80 L144.78,180.67 A64.2,64.2 0 0 0 117.97,180.56Z" fill="#7b93c6" stroke="#fdfdfd" stroke-width="1.2"/><path d="M151.51,149.80 A95.8,95.8 0 0 1 203.40,180.55 L179.55,201.28 A64.2,64.2 0 0 0 144.78,180.67Z" fill="#6691fb" stroke="#fdfdfd" stroke-width="1.2"/><path d="M203.40,180.55 A95.8,95.8 0 0 1 226.90,243.40 L195.30,243.40 A64.2,64.2 0 0 0 179.55,201.28Z" fill="#e36a14" stroke="#fdfdfd" stroke-width="1.2"/><path d="M226.90,243.40 A95.8,95.8 0 0 1 204.49,304.98 L180.28,284.67 A64.2,64.2 0 0 0 195.30,243.40Z" fill="#22a58b" stroke="#fdfdfd" stroke-width="1.2"/></svg>
<svg class="r" style="left:711.30px;top:861.00px;" width="21.00" height="21.00" viewBox="0 0 24 24"><circle cx="12" cy="12" r="12" fill="#1877f2"/><path fill="#fff" d="M13.4 24V15.5h2.8l.45-3.3H13.4v-2.1c0-.95.27-1.6 1.63-1.6h1.73V5.55c-.3-.04-1.33-.13-2.52-.13-2.5 0-4.2 1.52-4.2 4.3v2.48H7.2v3.3h2.84V24z"/></svg>
<div class="t" style="left:742.30px;top:863.51px;font-size:19.33px;font-weight:700;color:#242021;transform:scaleX(0.9245);transform-origin:0 0;-webkit-text-stroke:0.35px #242021;">Posts</div>
<svg class="r" style="left:694.90px;top:841.10px;" width="263.10" height="260.00" viewBox="0 0 263.1 260"><line x1="46.60" y1="106.40" x2="242.90" y2="106.40" stroke="#c9c9c9" stroke-width="1.2" stroke-dasharray="5 3"/><line x1="46.60" y1="137.80" x2="242.90" y2="137.80" stroke="#c9c9c9" stroke-width="1.2" stroke-dasharray="5 3"/><line x1="46.60" y1="169.40" x2="242.90" y2="169.40" stroke="#c9c9c9" stroke-width="1.2" stroke-dasharray="5 3"/><line x1="46.60" y1="200.80" x2="242.90" y2="200.80" stroke="#c9c9c9" stroke-width="1.2" stroke-dasharray="5 3"/><line x1="46.60" y1="232.20" x2="242.90" y2="232.20" stroke="#c9c9c9" stroke-width="1.2" stroke-dasharray="5 3"/><rect x="47.40" y="94.60" width="4.60" height="300" fill="#6891f9"/><rect x="53.90" y="122.40" width="4.10" height="300" fill="#0a5dd0"/><rect x="80.00" y="122.40" width="4.10" height="300" fill="#6891f9"/><rect x="85.30" y="122.40" width="4.30" height="300" fill="#0a5dd0"/><rect x="110.60" y="103.60" width="4.40" height="300" fill="#6891f9"/><rect x="116.10" y="103.60" width="4.20" height="300" fill="#0a5dd0"/><rect x="142.50" y="103.60" width="4.30" height="300" fill="#6891f9"/><rect x="148.00" y="103.60" width="4.10" height="300" fill="#0a5dd0"/><rect x="174.10" y="122.40" width="4.10" height="300" fill="#6891f9"/><rect x="179.40" y="94.60" width="4.30" height="300" fill="#0a5dd0"/><rect x="206.00" y="112.00" width="4.10" height="300" fill="#6891f9"/><rect x="211.30" y="121.70" width="4.30" height="300" fill="#0a5dd0"/><rect x="236.60" y="103.60" width="4.40" height="300" fill="#6891f9"/><rect x="241.70" y="103.60" width="4.10" height="300" fill="#0a5dd0"/><line x1="46.60" y1="74.10" x2="242.90" y2="74.10" stroke="#555" stroke-width="1.4" /><line x1="50.30" y1="74.10" x2="50.30" y2="78.50" stroke="#555" stroke-width="1.3" /><line x1="143.90" y1="74.10" x2="143.90" y2="78.50" stroke="#555" stroke-width="1.3" /><line x1="238.10" y1="74.10" x2="238.10" y2="78.50" stroke="#555" stroke-width="1.3" /></svg>
<div class="t" style="left:711.40px;top:909.71px;font-size:11.48px;font-weight:400;color:#3d3d3d;transform:scaleX(0.9807);transform-origin:0 0;">70</div>
<div class="t" style="left:711.40px;top:943.51px;font-size:11.48px;font-weight:400;color:#3d3d3d;transform:scaleX(0.9807);transform-origin:0 0;">60</div>
<div class="t" style="left:711.40px;top:976.11px;font-size:11.48px;font-weight:400;color:#3d3d3d;transform:scaleX(0.9807);transform-origin:0 0;">50</div>
<div class="t" style="left:711.40px;top:1008.61px;font-size:11.48px;font-weight:400;color:#3d3d3d;transform:scaleX(0.9807);transform-origin:0 0;">40</div>
<div class="t" style="left:711.40px;top:1041.21px;font-size:11.48px;font-weight:400;color:#3d3d3d;transform:scaleX(0.9807);transform-origin:0 0;">30</div>
<div class="t" style="left:711.40px;top:1073.80px;font-size:11.48px;font-weight:400;color:#3d3d3d;transform:scaleX(0.9807);transform-origin:0 0;">20</div>
<div class="t" style="left:741.50px;top:899.71px;font-size:12.06px;font-weight:400;color:#3d3d3d;transform:scaleX(0.9180);transform-origin:0 0;">12 Feb</div>
<div class="t" style="left:822.40px;top:899.71px;font-size:12.06px;font-weight:400;color:#3d3d3d;transform:scaleX(0.8994);transform-origin:0 0;">13 Feb</div>
<div class="t" style="left:902.50px;top:899.71px;font-size:12.06px;font-weight:400;color:#3d3d3d;transform:scaleX(0.9180);transform-origin:0 0;">18 Feb</div>
<svg class="r" style="left:992.20px;top:861.70px;" width="21.00" height="21.00" viewBox="0 0 24 24"><circle cx="12" cy="12" r="12" fill="#e03a78"/><rect x="6.3" y="6.3" width="11.4" height="11.4" rx="3.2" fill="none" stroke="#fff" stroke-width="1.5"/><circle cx="12" cy="12" r="2.7" fill="none" stroke="#fff" stroke-width="1.5"/><circle cx="15.3" cy="8.7" r="0.8" fill="#fff"/></svg>
<div class="t" style="left:1022.30px;top:864.01px;font-size:19.33px;font-weight:700;color:#242021;transform:scaleX(0.9607);transform-origin:0 0;-webkit-text-stroke:0.35px #242021;">Audience &gt; Age</div>
<div class="r" style="left:991.90px;top:898.80px;width:11.00px;height:11.00px;background:#6891fc;border-radius:50%;"></div>
<div class="t" style="left:1007.50px;top:897.70px;font-size:14.54px;font-weight:400;color:#3a3a3a;transform:scaleX(0.8976);transform-origin:0 0;">18-24</div>
<div class="r" style="left:1050.30px;top:898.80px;width:11.00px;height:11.00px;background:#e36a14;border-radius:50%;"></div>
<div class="t" style="left:1065.50px;top:897.70px;font-size:14.54px;font-weight:400;color:#3a3a3a;transform:scaleX(0.9137);transform-origin:0 0;">25-30</div>
<div class="r" style="left:1109.00px;top:898.80px;width:11.00px;height:11.00px;background:#22a58b;border-radius:50%;"></div>
<div class="t" style="left:1124.00px;top:897.70px;font-size:14.54px;font-weight:400;color:#3a3a3a;transform:scaleX(0.9245);transform-origin:0 0;">30-35</div>
<div class="r" style="left:1167.40px;top:898.80px;width:11.00px;height:11.00px;background:#9b27c2;border-radius:50%;"></div>
<div class="t" style="left:1183.30px;top:897.70px;font-size:14.54px;font-weight:400;color:#3a3a3a;transform:scaleX(0.9057);transform-origin:0 0;">35-40</div>
<svg class="r" style="left:975.10px;top:841.10px;" width="263.10" height="260.00" viewBox="0 0 263.1 260"><line x1="46.40" y1="104.80" x2="246.80" y2="104.80" stroke="#c9c9c9" stroke-width="1.2" stroke-dasharray="5 3"/><line x1="46.40" y1="129.40" x2="246.80" y2="129.40" stroke="#c9c9c9" stroke-width="1.2" stroke-dasharray="5 3"/><line x1="46.40" y1="154.50" x2="246.80" y2="154.50" stroke="#c9c9c9" stroke-width="1.2" stroke-dasharray="5 3"/><line x1="46.40" y1="180.10" x2="246.80" y2="180.10" stroke="#c9c9c9" stroke-width="1.2" stroke-dasharray="5 3"/><line x1="46.40" y1="205.40" x2="246.80" y2="205.40" stroke="#c9c9c9" stroke-width="1.2" stroke-dasharray="5 3"/><line x1="46.40" y1="230.40" x2="246.80" y2="230.40" stroke="#c9c9c9" stroke-width="1.2" stroke-dasharray="5 3"/><path d="M49.30,227.10 C54.65,213.23 70.62,158.45 81.40,143.90 C92.18,129.35 103.13,147.53 114.00,139.80 C124.87,132.07 135.82,104.15 146.60,97.50 C157.38,90.85 167.95,96.40 178.70,99.90 C189.45,103.40 200.28,115.97 211.10,118.50 C221.92,121.03 238.18,115.67 243.60,115.10 L243.60,300 L49.30,300Z" fill="#c57bd4"/><path d="M49.30,227.10 C54.65,213.23 70.62,158.45 81.40,143.90 C92.18,129.35 103.13,147.53 114.00,139.80 C124.87,132.07 135.82,104.15 146.60,97.50 C157.38,90.85 167.95,96.40 178.70,99.90 C189.45,103.40 200.28,115.97 211.10,118.50 C221.92,121.03 238.18,115.67 243.60,115.10" fill="none" stroke="#9b27c2" stroke-width="2.2"/><circle cx="49.30" cy="227.10" r="3.0" fill="#9b27c2"/><circle cx="81.40" cy="143.90" r="3.0" fill="#9b27c2"/><circle cx="114.00" cy="139.80" r="3.0" fill="#9b27c2"/><circle cx="146.60" cy="97.50" r="3.0" fill="#9b27c2"/><circle cx="178.70" cy="99.90" r="3.0" fill="#9b27c2"/><circle cx="211.10" cy="118.50" r="3.0" fill="#9b27c2"/><circle cx="243.60" cy="115.10" r="3.0" fill="#9b27c2"/><path d="M49.30,245.20 C54.65,233.47 70.62,186.53 81.40,174.80 C92.18,163.07 103.13,185.27 114.00,174.80 C124.87,164.33 135.82,121.38 146.60,112.00 C157.38,102.62 167.95,114.07 178.70,118.50 C189.45,122.93 200.28,135.78 211.10,138.60 C221.92,141.42 238.18,135.93 243.60,135.40 L243.60,300 L49.30,300Z" fill="#75bfb2"/><path d="M49.30,245.20 C54.65,233.47 70.62,186.53 81.40,174.80 C92.18,163.07 103.13,185.27 114.00,174.80 C124.87,164.33 135.82,121.38 146.60,112.00 C157.38,102.62 167.95,114.07 178.70,118.50 C189.45,122.93 200.28,135.78 211.10,138.60 C221.92,141.42 238.18,135.93 243.60,135.40" fill="none" stroke="#1f9e85" stroke-width="2.2"/><circle cx="49.30" cy="245.20" r="3.0" fill="#1f9e85"/><circle cx="81.40" cy="174.80" r="3.0" fill="#1f9e85"/><circle cx="114.00" cy="174.80" r="3.0" fill="#1f9e85"/><circle cx="146.60" cy="112.00" r="3.0" fill="#1f9e85"/><circle cx="178.70" cy="118.50" r="3.0" fill="#1f9e85"/><circle cx="211.10" cy="138.60" r="3.0" fill="#1f9e85"/><circle cx="243.60" cy="135.40" r="3.0" fill="#1f9e85"/><path d="M49.30,268.90 C54.65,255.70 70.62,203.47 81.40,189.70 C92.18,175.93 103.13,193.53 114.00,186.30 C124.87,179.07 135.82,155.35 146.60,146.30 C157.38,137.25 167.95,127.25 178.70,132.00 C189.45,136.75 200.28,168.68 211.10,174.80 C221.92,180.92 238.18,169.72 243.60,168.70 L243.60,300 L49.30,300Z" fill="#e8ad80"/><path d="M49.30,268.90 C54.65,255.70 70.62,203.47 81.40,189.70 C92.18,175.93 103.13,193.53 114.00,186.30 C124.87,179.07 135.82,155.35 146.60,146.30 C157.38,137.25 167.95,127.25 178.70,132.00 C189.45,136.75 200.28,168.68 211.10,174.80 C221.92,180.92 238.18,169.72 243.60,168.70" fill="none" stroke="#e36a14" stroke-width="2.2"/><circle cx="49.30" cy="268.90" r="3.0" fill="#e36a14"/><circle cx="81.40" cy="189.70" r="3.0" fill="#e36a14"/><circle cx="114.00" cy="186.30" r="3.0" fill="#e36a14"/><circle cx="146.60" cy="146.30" r="3.0" fill="#e36a14"/><circle cx="178.70" cy="132.00" r="3.0" fill="#e36a14"/><circle cx="211.10" cy="174.80" r="3.0" fill="#e36a14"/><circle cx="243.60" cy="168.70" r="3.0" fill="#e36a14"/><path d="M49.30,298.90 C54.65,292.23 70.62,270.22 81.40,258.90 C92.18,247.58 103.13,236.70 114.00,231.00 C124.87,225.30 135.82,235.80 146.60,224.70 C157.38,213.60 167.95,167.58 178.70,164.40 C189.45,161.22 200.28,195.30 211.10,205.60 C221.92,215.90 238.18,222.77 243.60,226.20 L243.60,300 L49.30,300Z" fill="#a1b6f6"/><path d="M49.30,298.90 C54.65,292.23 70.62,270.22 81.40,258.90 C92.18,247.58 103.13,236.70 114.00,231.00 C124.87,225.30 135.82,235.80 146.60,224.70 C157.38,213.60 167.95,167.58 178.70,164.40 C189.45,161.22 200.28,195.30 211.10,205.60 C221.92,215.90 238.18,222.77 243.60,226.20" fill="none" stroke="#6891f9" stroke-width="2.2"/><circle cx="49.30" cy="298.90" r="3.0" fill="#6891f9"/><circle cx="81.40" cy="258.90" r="3.0" fill="#6891f9"/><circle cx="114.00" cy="231.00" r="3.0" fill="#6891f9"/><circle cx="146.60" cy="224.70" r="3.0" fill="#6891f9"/><circle cx="178.70" cy="164.40" r="3.0" fill="#6891f9"/><circle cx="211.10" cy="205.60" r="3.0" fill="#6891f9"/><circle cx="243.60" cy="226.20" r="3.0" fill="#6891f9"/></svg>
<div class="t" style="left:985.80px;top:939.10px;font-size:11.92px;font-weight:400;color:#3d3d3d;transform:scaleX(0.9578);transform-origin:0 0;">5000</div>
<div class="t" style="left:985.80px;top:978.71px;font-size:11.92px;font-weight:400;color:#3d3d3d;transform:scaleX(0.9578);transform-origin:0 0;">4000</div>
<div class="t" style="left:985.80px;top:1018.31px;font-size:11.92px;font-weight:400;color:#3d3d3d;transform:scaleX(0.9578);transform-origin:0 0;">3000</div>
<div class="t" style="left:985.80px;top:1057.60px;font-size:11.92px;font-weight:400;color:#3d3d3d;transform:scaleX(0.9578);transform-origin:0 0;">2000</div>
<svg class="r" style="left:1268.20px;top:856.90px;" width="21.00" height="21.00" viewBox="0 0 24 24"><circle cx="12" cy="12" r="12" fill="#1877f2"/><path fill="#fff" d="M13.4 24V15.5h2.8l.45-3.3H13.4v-2.1c0-.95.27-1.6 1.63-1.6h1.73V5.55c-.3-.04-1.33-.13-2.52-.13-2.5 0-4.2 1.52-4.2 4.3v2.48H7.2v3.3h2.84V24z"/></svg>
<div class="t" style="left:1298.80px;top:858.72px;font-size:19.33px;font-weight:700;color:#242021;transform:scaleX(0.9527);transform-origin:0 0;-webkit-text-stroke:0.35px #242021;">Fans by Page</div>
<div class="r" style="left:1255.10px;top:912.80px;width:263.10px;height:1.20px;background:#ece8e4;"></div>
<div class="r" style="left:1255.10px;top:988.00px;width:263.10px;height:1.20px;background:#ece8e4;"></div>
<div class="r" style="left:1255.10px;top:1063.00px;width:263.10px;height:1.20px;background:#ece8e4;"></div>
<div class="t" style="left:1268.60px;top:950.51px;font-size:15.70px;font-weight:700;color:#242021;transform:scaleX(0.9614);transform-origin:0 0;-webkit-text-stroke:0.28px #242021;">Somos London</div>
<svg class="r" style="left:1394.00px;top:948.90px;" width="17.00" height="17.00" viewBox="0 0 24 24"><circle cx="12" cy="12" r="12" fill="#b0d9b8"/><path d="M7.4 16.7L15.6 8.6" stroke="#08861f" stroke-width="2.9" stroke-linecap="round"/><path d="M9.9 7.4H17.2V14" fill="none" stroke="#08861f" stroke-width="2.9" stroke-linecap="round" stroke-linejoin="round"/></svg>
<div class="t" style="left:1415.80px;top:951.51px;font-size:14.97px;font-weight:700;color:#242021;transform:scaleX(1.0170);transform-origin:0 0;-webkit-text-stroke:0.27px #242021;">61</div>
<div class="r" style="left:1441.90px;top:944.20px;width:64.00px;height:26.50px;background:#6891fc;"></div>
<div class="t" style="left:1451.20px;top:950.51px;font-size:18.31px;font-weight:700;color:#ffffff;transform:scaleX(1.0372);transform-origin:0 0;-webkit-text-stroke:0.33px #ffffff;">126K</div>
<div class="t" style="left:1268.60px;top:1021.01px;font-size:15.70px;font-weight:700;color:#242021;transform:scaleX(0.9662);transform-origin:0 0;-webkit-text-stroke:0.28px #242021;">Somos Vancouver</div>
<svg class="r" style="left:1404.90px;top:1019.40px;" width="17.00" height="17.00" viewBox="0 0 24 24"><circle cx="12" cy="12" r="12" fill="#b0d9b8"/><path d="M7.4 16.7L15.6 8.6" stroke="#08861f" stroke-width="2.9" stroke-linecap="round"/><path d="M9.9 7.4H17.2V14" fill="none" stroke="#08861f" stroke-width="2.9" stroke-linecap="round" stroke-linejoin="round"/></svg>
<div class="t" style="left:1426.70px;top:1022.01px;font-size:14.97px;font-weight:700;color:#242021;transform:scaleX(0.9869);transform-origin:0 0;-webkit-text-stroke:0.27px #242021;">61</div>
<div class="r" style="left:1452.70px;top:1014.60px;width:53.20px;height:26.60px;background:#6891fc;"></div>
<div class="t" style="left:1461.30px;top:1020.82px;font-size:18.31px;font-weight:700;color:#ffffff;transform:scaleX(1.0712);transform-origin:0 0;-webkit-text-stroke:0.33px #ffffff;">62K</div>
<div class="r" style="left:1452.70px;top:1084.60px;width:53.20px;height:25.40px;background:#6891fc;"></div>
<svg class="r" style="left:1404.90px;top:1089.90px;" width="17.00" height="17.00" viewBox="0 0 24 24"><circle cx="12" cy="12" r="12" fill="#f3b4b3"/><path d="M7.4 7.3L15.6 15.4" stroke="#e0443e" stroke-width="2.9" stroke-linecap="round"/><path d="M9.9 16.6H17.2V10" fill="none" stroke="#e0443e" stroke-width="2.9" stroke-linecap="round" stroke-linejoin="round"/></svg>
<div class="r" style="left:1381.60px;top:1092.20px;width:1.60px;height:1.80px;background:#333;"></div>
<div class="t" style="left:1461.30px;top:1091.32px;font-size:18.31px;font-weight:700;color:#ffffff;transform:scaleX(1.0712);transform-origin:0 0;-webkit-text-stroke:0.33px #ffffff;">40K</div></body></html>
